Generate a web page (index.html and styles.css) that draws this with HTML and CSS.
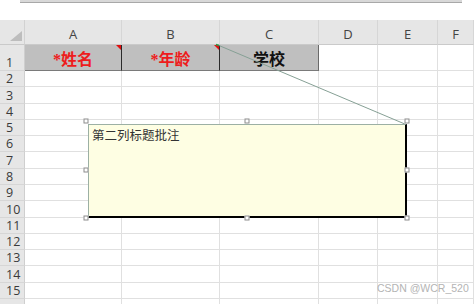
FILE: index.html
```html
<!DOCTYPE html>
<html lang="zh">

<head>
    <meta charset="UTF-8">
    <meta name="viewport" content="width=device-width, initial-scale=1.0">
    <title>批注示例</title>
    <link rel="stylesheet" href="styles.css">
</head>

<body>
    <div class="topbar"></div>

    <div class="sheet">
        <div class="row head">
            <div class="corner"><span class="tri"></span></div>
            <div class="col">A</div>
            <div class="col">B</div>
            <div class="col">C</div>
            <div class="col">D</div>
            <div class="col">E</div>
            <div class="col">F</div>
        </div>

        <div class="row r1">
            <div class="rh">1</div>
            <div class="cell title red note">*姓名</div>
            <div class="cell title red note">*年龄</div>
            <div class="cell title last">学校</div>
            <div class="cell"></div>
            <div class="cell"></div>
            <div class="cell"></div>
        </div>

        <div class="row"><div class="rh">2</div><div class="cell"></div><div class="cell"></div><div class="cell"></div><div class="cell"></div><div class="cell"></div><div class="cell"></div></div>
        <div class="row"><div class="rh">3</div><div class="cell"></div><div class="cell"></div><div class="cell"></div><div class="cell"></div><div class="cell"></div><div class="cell"></div></div>
        <div class="row"><div class="rh">4</div><div class="cell"></div><div class="cell"></div><div class="cell"></div><div class="cell"></div><div class="cell"></div><div class="cell"></div></div>
        <div class="row"><div class="rh">5</div><div class="cell"></div><div class="cell"></div><div class="cell"></div><div class="cell"></div><div class="cell"></div><div class="cell"></div></div>
        <div class="row"><div class="rh">6</div><div class="cell"></div><div class="cell"></div><div class="cell"></div><div class="cell"></div><div class="cell"></div><div class="cell"></div></div>
        <div class="row"><div class="rh">7</div><div class="cell"></div><div class="cell"></div><div class="cell"></div><div class="cell"></div><div class="cell"></div><div class="cell"></div></div>
        <div class="row"><div class="rh">8</div><div class="cell"></div><div class="cell"></div><div class="cell"></div><div class="cell"></div><div class="cell"></div><div class="cell"></div></div>
        <div class="row"><div class="rh">9</div><div class="cell"></div><div class="cell"></div><div class="cell"></div><div class="cell"></div><div class="cell"></div><div class="cell"></div></div>
        <div class="row"><div class="rh">10</div><div class="cell"></div><div class="cell"></div><div class="cell"></div><div class="cell"></div><div class="cell"></div><div class="cell"></div></div>
        <div class="row"><div class="rh">11</div><div class="cell"></div><div class="cell"></div><div class="cell"></div><div class="cell"></div><div class="cell"></div><div class="cell"></div></div>
        <div class="row"><div class="rh">12</div><div class="cell"></div><div class="cell"></div><div class="cell"></div><div class="cell"></div><div class="cell"></div><div class="cell"></div></div>
        <div class="row"><div class="rh">13</div><div class="cell"></div><div class="cell"></div><div class="cell"></div><div class="cell"></div><div class="cell"></div><div class="cell"></div></div>
        <div class="row"><div class="rh">14</div><div class="cell"></div><div class="cell"></div><div class="cell"></div><div class="cell"></div><div class="cell"></div><div class="cell"></div></div>
        <div class="row"><div class="rh">15</div><div class="cell"></div><div class="cell"></div><div class="cell"></div><div class="cell"></div><div class="cell"></div><div class="cell"></div></div>
        <div class="row"><div class="rh"></div><div class="cell"></div><div class="cell"></div><div class="cell"></div><div class="cell"></div><div class="cell"></div><div class="cell"></div></div>

        <!-- comment attached to B1 -->
        <svg class="leader" width="474" height="120" viewBox="0 0 474 120">
            <line x1="219" y1="25.5" x2="406" y2="104.5" stroke="#86a095" stroke-width="1" />
            <line x1="216" y1="24.5" x2="219" y2="25.5" stroke="#2f9a4a" stroke-width="1.5" />
        </svg>

        <div class="comment">第二列标题批注</div>

        <div class="selection">
            <span class="handle tl"></span>
            <span class="handle tm"></span>
            <span class="handle tr"></span>
            <span class="handle ml"></span>
            <span class="handle mr"></span>
            <span class="handle bl"></span>
            <span class="handle bm"></span>
            <span class="handle br"></span>
        </div>
    </div>

    <div class="watermark">CSDN @WCR_520</div>
</body>

</html>
```

FILE: styles.css
```css
body {
    margin: 0;
    width: 474px;
    height: 304px;
    overflow: hidden;
    background-color: #ffffff;
    font-family: "Open Sans", "Noto Sans CJK SC", sans-serif;
    position: relative;
}

.topbar {
    height: 2px;
    margin: 0 12px 17px 20px;
    background-color: #d8d8d8;
    border-bottom: 1px solid #a8a8a8;
}

.sheet {
    position: relative;
}

.row {
    display: grid;
    grid-template-columns: 25px 97px 98px 99px 59px 60px 36px;
    height: 16.29px;
}

.row.head {
    height: 25px;
    background-color: #e6e6e6;
}

.row.r1 {
    height: 26px;
}

.corner {
    position: relative;
    border-right: 1px solid #d2d2d2;
    border-bottom: 1px solid #cacaca;
}

.tri {
    position: absolute;
    left: 10px;
    bottom: 3px;
    width: 0;
    height: 0;
    border-left: 12px solid transparent;
    border-bottom: 10px solid #bdbdbd;
}

.col {
    display: flex;
    align-items: flex-end;
    justify-content: center;
    padding-bottom: 2px;
    font-size: 13px;
    line-height: 16px;
    color: #444;
    border-right: 1px solid #d6d6d6;
    border-bottom: 1px solid #cacaca;
    box-sizing: border-box;
}

.rh {
    display: flex;
    align-items: flex-end;
    padding: 0 0 1px 6px;
    font-size: 12.5px;
    line-height: 13px;
    color: #3a3a3a;
    background-color: #e6e6e6;
    border-right: 1px solid #cfcfcf;
    border-bottom: 1px solid #d6d6d6;
    box-sizing: border-box;
    overflow: hidden;
}

.cell {
    border-right: 1px solid #e0e0e0;
    border-bottom: 1px solid #e0e0e0;
    box-sizing: border-box;
}

.cell.title {
    position: relative;
    display: flex;
    align-items: center;
    justify-content: center;
    background-color: #bfbfbf;
    border-right: 1px solid #2a2a2a;
    border-bottom: 1px solid #7a7a7a;
    font-family: "Liberation Serif", "Noto Sans CJK SC", serif;
    font-size: 16px;
    font-weight: bold;
    color: #111;
}

.cell.title.last {
    border-right-color: #6a6a6a;
}

.red {
    color: #ee1c1c !important;
}

.note::after {
    content: "";
    position: absolute;
    top: 0;
    right: 0;
    width: 0;
    height: 0;
    border-top: 5px solid #e01010;
    border-left: 5px solid transparent;
}

.leader {
    position: absolute;
    left: 0;
    top: 0;
    pointer-events: none;
}

.comment {
    position: absolute;
    left: 88px;
    top: 104px;
    width: 319px;
    height: 94px;
    box-sizing: border-box;
    padding: 2px 0 0 3px;
    background-color: #fefee3;
    border-top: 1px solid #9cb0a4;
    border-left: 1px solid #9cb0a4;
    border-right: 2px solid #000;
    border-bottom: 2px solid #000;
    font-family: "Noto Sans CJK SC", sans-serif;
    font-size: 12.5px;
    line-height: 16px;
    color: #333;
}

.selection {
    position: absolute;
    left: 86px;
    top: 101px;
    width: 321px;
    height: 97px;
}

.handle {
    position: absolute;
    width: 5px;
    height: 5px;
    box-sizing: border-box;
    background-color: #fff;
    border: 1px solid #8c8c8c;
    transform: translate(-50%, -50%);
}

.tl { left: 0; top: 0; }
.tm { left: 50%; top: 0; }
.tr { left: 100%; top: 0; }
.ml { left: 0; top: 50%; }
.mr { left: 100%; top: 50%; }
.bl { left: 0; top: 100%; }
.bm { left: 50%; top: 100%; }
.br { left: 100%; top: 100%; }

.watermark {
    position: absolute;
    left: 377px;
    top: 282px;
    font-family: "Liberation Sans", sans-serif;
    font-size: 10.5px;
    color: #b4b4b4;
}
```
